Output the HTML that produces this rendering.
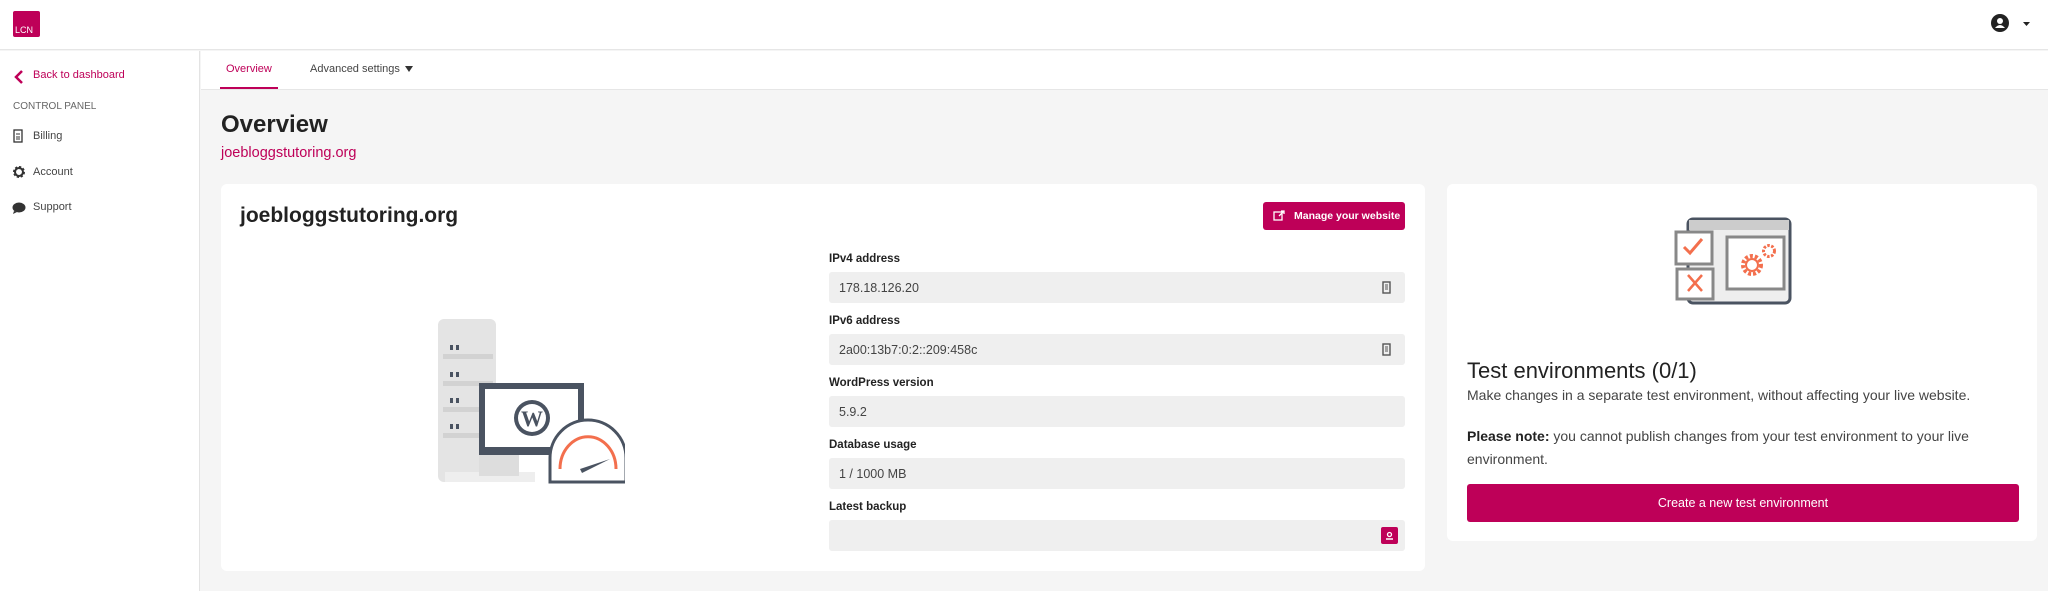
<!DOCTYPE html>
<html><head><meta charset="utf-8"><style>
*{box-sizing:border-box;margin:0;padding:0}
body{width:2048px;height:591px;overflow:hidden;background:#f5f5f5;font-family:"Liberation Sans",sans-serif;color:#333;position:relative}
.abs{position:absolute;white-space:nowrap}
.hdr{left:0;top:0;width:2048px;height:50px;background:#fff;border-bottom:1px solid #e6e6e6}
.side{left:0;top:51px;width:200px;height:540px;background:#fff;border-right:1px solid #e3e3e3}
.tabs{left:201px;top:51px;width:1847px;height:39px;background:#fff;border-bottom:1px solid #e6e6e6}
.t{font-size:11px;color:#444}
.card{background:#fff;border-radius:6px}
.lbl{left:829px;font-size:11.5px;font-weight:bold;color:#222}
.fld{left:829px;width:576px;height:31px;background:#efefef;border-radius:3px;font-size:12.5px;color:#444;padding:9px 10px}
.mag{color:#be0058}
</style></head><body>
<div class="abs hdr"></div>
<div class="abs" style="left:13px;top:11px;width:27px;height:26px;background:#be0058;border-radius:2px;color:#fff;font-size:9px;padding:14px 0 0 2px">LCN</div>
<svg class="abs" style="left:1991px;top:14px" width="44" height="20"><circle cx="9" cy="9" r="9" fill="#222"/><circle cx="9" cy="7" r="3" fill="#fff"/><path d="M4 14q5-6 10 0z" fill="#fff"/><path d="M32 8h7l-3.5 4z" fill="#222"/></svg>
<div class="abs side"></div>
<svg class="abs" style="left:14px;top:70px" width="10" height="14"><path d="M8 1L2 7l6 6" stroke="#be0058" stroke-width="2.5" fill="none"/></svg>
<div class="abs t mag" style="left:33px;top:69px">Back to dashboard</div>
<div class="abs" style="left:13px;top:101px;font-size:10px;color:#666">CONTROL PANEL</div>
<svg class="abs" style="left:13px;top:129px" width="10" height="14"><rect x="1" y="1" width="8" height="12" fill="none" stroke="#333" stroke-width="1.3"/><path d="M3 5h4M3 8h4M3 10h4" stroke="#333"/></svg>
<div class="abs t" style="left:33px;top:130px">Billing</div>
<svg class="abs" style="left:12px;top:165px" width="14" height="14"><circle cx="7" cy="7" r="4.5" fill="none" stroke="#333" stroke-width="3" stroke-dasharray="2 1.5"/><circle cx="7" cy="7" r="4" fill="none" stroke="#333" stroke-width="2"/></svg>
<div class="abs t" style="left:33px;top:166px">Account</div>
<svg class="abs" style="left:12px;top:202px" width="14" height="13"><ellipse cx="7" cy="5.5" rx="6.5" ry="5" fill="#333"/><path d="M2 9l-1 3 4-2z" fill="#333"/></svg>
<div class="abs t" style="left:33px;top:201px">Support</div>
<div class="abs tabs"></div>
<div class="abs mag" style="left:226px;top:63px;font-size:11px">Overview</div>
<div class="abs" style="left:220px;top:87px;width:58px;height:2px;background:#be0058"></div>
<div class="abs" style="left:310px;top:63px;font-size:11px;color:#444">Advanced settings</div>
<svg class="abs" style="left:405px;top:66px" width="9" height="7"><path d="M0 0h8l-4 6z" fill="#333"/></svg>
<div class="abs" style="left:221px;top:111px;font-size:24px;font-weight:bold;color:#222">Overview</div>
<div class="abs mag" style="left:221px;top:145px;font-size:14.5px">joebloggstutoring.org</div>
<div class="abs card" style="left:221px;top:184px;width:1204px;height:387px"></div>
<div class="abs" style="left:240px;top:204px;font-size:21px;font-weight:bold;color:#222">joebloggstutoring.org</div>
<div class="abs" style="left:1263px;top:202px;width:142px;height:28px;background:#be0058;border-radius:3px;color:#fff;font-size:10.5px;font-weight:bold;padding:8px 0 0 31px">Manage your website</div>
<svg class="abs" style="left:1273px;top:210px" width="12" height="12"><rect x="1" y="2" width="8" height="8" fill="none" stroke="#fff" stroke-width="1.3"/><path d="M6 6l5-5M8 1h3v3" stroke="#fff" stroke-width="1.3" fill="none"/></svg>
<div class="abs lbl" style="top:253px">IPv4 address</div>
<div class="abs fld" style="top:272px">178.18.126.20</div>
<div class="abs lbl" style="top:315px">IPv6 address</div>
<div class="abs fld" style="top:334px">2a00:13b7:0:2::209:458c</div>
<div class="abs lbl" style="top:377px">WordPress version</div>
<div class="abs fld" style="top:396px">5.9.2</div>
<div class="abs lbl" style="top:439px">Database usage</div>
<div class="abs fld" style="top:458px">1 / 1000 MB</div>
<div class="abs lbl" style="top:501px">Latest backup</div>
<div class="abs fld" style="top:520px"></div>
<svg class="abs" style="left:1382px;top:280px" width="10" height="14"><rect x="1" y="2" width="7" height="11" fill="none" stroke="#555" stroke-width="1.4"/><path d="M3 5h3M3 7h3M3 9h3" stroke="#555"/></svg>
<svg class="abs" style="left:1382px;top:342px" width="10" height="14"><rect x="1" y="2" width="7" height="11" fill="none" stroke="#555" stroke-width="1.4"/><path d="M3 5h3M3 7h3M3 9h3" stroke="#555"/></svg>
<div class="abs" style="left:1381px;top:527px;width:17px;height:17px;background:#be0058;border-radius:2px"></div>
<svg class="abs" style="left:1384px;top:530px" width="11" height="11"><circle cx="5.5" cy="4.5" r="2" fill="none" stroke="#fff" stroke-width="1.3"/><path d="M2 9h7" stroke="#fff" stroke-width="1.5"/></svg>
<svg class="abs" style="left:435px;top:319px" width="190" height="165">
<rect x="3" y="0" width="58" height="163" rx="6" fill="#e4e4e4"/>
<g fill="#4a5361"><rect x="15" y="26" width="3" height="5"/><rect x="21" y="26" width="3" height="5"/><rect x="15" y="53" width="3" height="5"/><rect x="21" y="53" width="3" height="5"/><rect x="15" y="79" width="3" height="5"/><rect x="21" y="79" width="3" height="5"/><rect x="15" y="105" width="3" height="5"/><rect x="21" y="105" width="3" height="5"/></g>
<g fill="#d2d2d2"><rect x="8" y="35" width="50" height="5"/><rect x="8" y="62" width="50" height="5"/><rect x="8" y="88" width="50" height="5"/><rect x="8" y="114" width="50" height="5"/></g>
<rect x="10" y="153" width="90" height="10" fill="#eee"/>
<rect x="44" y="135" width="40" height="22" fill="#ddd"/>
<rect x="44" y="64" width="105" height="72" fill="#4a5361"/>
<rect x="50" y="70" width="93" height="58" fill="#fff"/>
<circle cx="97" cy="99" r="18" fill="#4a5361"/><circle cx="97" cy="99" r="14" fill="#fff"/><text x="97" y="107" text-anchor="middle" font-size="22" font-weight="bold" font-family="Liberation Serif" fill="#4a5361">W</text>
<path d="M115 163v-24a38 38 0 0 1 76 0v24z" fill="#fff" stroke="#4a5361" stroke-width="3"/>
<path d="M125 150a26 30 0 0 1 56 0" fill="none" stroke="#f36f4d" stroke-width="3"/>
<path d="M145 150l30-10-28 14z" fill="#4a5361"/>
</svg>
<div class="abs card" style="left:1447px;top:184px;width:590px;height:357px"></div>
<svg class="abs" style="left:1674px;top:217px" width="140" height="90">
<rect x="14" y="2" width="102" height="84" rx="5" fill="#eee" stroke="#4a5361" stroke-width="3"/>
<rect x="15" y="3" width="100" height="10" fill="#ccc"/>
<rect x="2" y="15" width="36" height="32" fill="#fff" stroke="#888" stroke-width="3"/>
<path d="M10 30l6 6 12-14" stroke="#f36f4d" stroke-width="3" fill="none"/>
<rect x="3" y="52" width="36" height="30" fill="#fff" stroke="#888" stroke-width="3"/>
<path d="M14 58l14 16M28 58L14 74" stroke="#f36f4d" stroke-width="2.5"/>
<rect x="53" y="20" width="57" height="52" fill="#fff" stroke="#888" stroke-width="3"/>
<circle cx="78" cy="48" r="9" fill="none" stroke="#f36f4d" stroke-width="4" stroke-dasharray="3 2"/><circle cx="78" cy="48" r="6" fill="none" stroke="#f36f4d" stroke-width="2"/>
<circle cx="95" cy="34" r="5.5" fill="none" stroke="#f36f4d" stroke-width="3" stroke-dasharray="2.5 1.5"/>
</svg>
<div class="abs" style="left:1467px;top:358px;font-size:22px;color:#222">Test environments (0/1)</div>
<div class="abs" style="left:1467px;top:387px;font-size:14px;color:#444">Make changes in a separate test environment, without affecting your live website.</div>
<div class="abs" style="left:1467px;top:425px;font-size:14px;color:#444;width:540px;line-height:23px;white-space:normal"><b style="color:#222">Please note:</b> you cannot publish changes from your test environment to your live environment.</div>
<div class="abs" style="left:1467px;top:484px;width:552px;height:38px;background:#be0058;border-radius:3px;color:#fff;font-size:12.5px;text-align:center;line-height:38px">Create a new test environment</div>
</body></html>
